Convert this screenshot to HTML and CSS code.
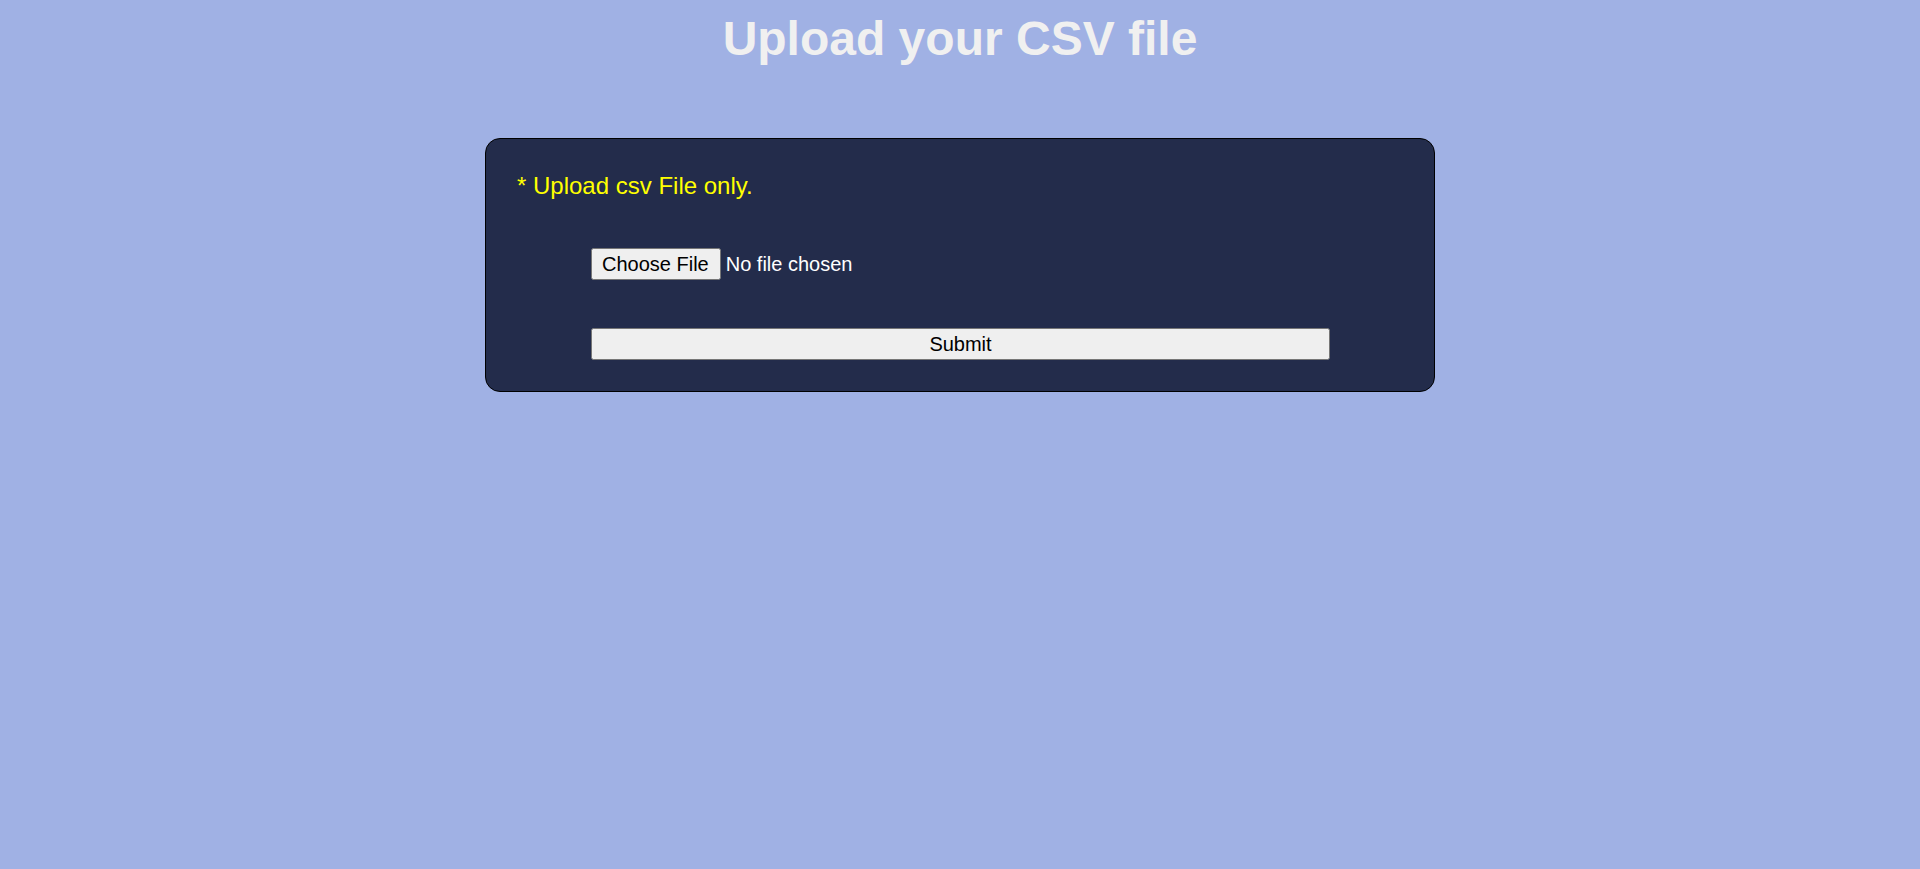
FILE: index.html
```html
<!DOCTYPE html>
<html lang="en">
<head>
    <meta charset="UTF-8">
    <meta name="viewport" content="width=device-width, initial-scale=1.0">
    <title>Upload CSV</title>
    <link rel="stylesheet" href="styles.css">
</head>
<body>
    <h1 class="title">Upload your CSV file</h1>

    <div class="upload-box">
        <p class="hint">* Upload csv File only.</p>

        <form class="upload-form" action="#" method="post" enctype="multipart/form-data">
            <input type="file" name="file" accept=".csv" class="file-input">
            <input type="submit" value="Submit" class="submit-btn">
        </form>
    </div>
</body>
</html>
```

FILE: styles.css
```css
body {
    font-family: "Liberation Sans", Arial, sans-serif;
    margin: 0;
    background-color: #a0b1e4;
}
.title {
    text-align: center;
    color: #f0f0f0;
    font-size: 48px;
    font-weight: bold;
    margin: 11px 0 0;
}
.upload-box {
    width: 950px;
    box-sizing: border-box;
    margin: 72px auto 0;
    padding: 0 32px 31px;
    background-color: #232c4b;
    border: 1px solid #000;
    border-radius: 15px;
}
.hint {
    color: #ffff00;
    font-size: 24px;
    margin: 33px 0 0 -1px;
}
.upload-form {
    display: flex;
    flex-direction: column;
    align-items: flex-start;
    margin: 48px 72px 0 73px;
}
.file-input {
    font-family: inherit;
    font-size: 20px;
    color: #fff;
}
.file-input::file-selector-button {
    font-family: inherit;
    font-size: 20px;
    padding: 3px 10px 2px 9px;
    margin-right: 5px;
}
.submit-btn {
    font-family: inherit;
    font-size: 20px;
    width: 100%;
    padding: 3px 6px 2px;
    margin-top: 48px;
}
```
